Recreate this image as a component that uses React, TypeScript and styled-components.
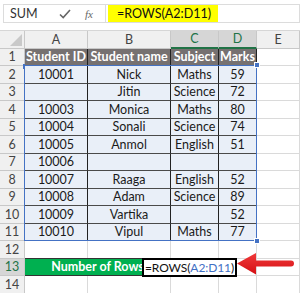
import React from 'react';
import styled, { createGlobalStyle, css } from 'styled-components';

const Global = createGlobalStyle`
  html, body { margin: 0; padding: 0; background: #fff; }
  body { font-family: Lato, "Liberation Sans", sans-serif; }
`;

const Page = styled.div`
  width: 300px;
  height: 293px;
  overflow: hidden;
  position: relative;
  background: #fff;
`;

const FormulaBar = styled.div`
  height: 31px;
  box-sizing: border-box;
  display: flex;
  align-items: flex-start;
  padding: 4px 0 0 3px;
  background: #fff;
  border-bottom: 1px solid #d6d6d6;
`;

const NameBox = styled.div`
  width: 48px;
  height: 19px;
  box-sizing: border-box;
  border: 1px solid #dcdcdc;
  border-right: none;
  font-size: 12.5px;
  color: #333;
  display: flex;
  align-items: center;
  padding-left: 6px;
`;

const IconZone = styled.div`
  width: 54px;
  height: 19px;
  box-sizing: border-box;
  border-top: 1px solid #dcdcdc;
  border-bottom: 1px solid #dcdcdc;
  display: flex;
  align-items: center;
  gap: 14px;
  padding-left: 8px;
`;

const Fx = styled.span`
  font-family: "Liberation Serif", serif;
  font-style: italic;
  font-size: 11px;
  color: #666;
`;

const FormulaInput = styled.div`
  flex: 1;
  height: 19px;
  box-sizing: border-box;
  border: 1px solid #dcdcdc;
  display: flex;
  align-items: stretch;
  padding-left: 2px;
`;

const Highlight = styled.span`
  background: #ffff00;
  width: 110px;
  display: flex;
  align-items: center;
  padding-left: 9px;
  box-sizing: border-box;
  font-size: 12.5px;
  color: #111;
`;

const Sheet = styled.div`
  display: grid;
  grid-template-columns: 25px 63px 83px 48px 38px 1fr;
  grid-template-rows: repeat(15, 17.5px);
  position: relative;
`;

const Corner = styled.div`
  background: #f0f0f0;
  border-right: 1px solid #c8c8c8;
  border-bottom: 1px solid #c8c8c8;
  box-sizing: border-box;
  position: relative;
  &::after {
    content: '';
    position: absolute;
    right: 2px;
    bottom: 2px;
    width: 0;
    height: 0;
    border-left: 12px solid transparent;
    border-bottom: 12px solid #c9c9c9;
  }
`;

const HeaderCell = styled.div<{ $sel?: boolean }>`
  box-sizing: border-box;
  background: #f0f0f0;
  border-right: 1px solid #c8c8c8;
  border-bottom: 1px solid #c8c8c8;
  display: flex;
  align-items: center;
  justify-content: center;
  font-size: 12.5px;
  color: #444;
  ${(p) =>
    p.$sel &&
    css`
      background: #d6d6d6;
      color: #217346;
    `}
`;

const ColHeader = styled(HeaderCell)<{ $sel?: boolean }>`
  ${(p) =>
    p.$sel &&
    css`
      border-bottom: 2px solid #217346;
    `}
`;

type Kind = 'plain' | 'head' | 'data' | 'total';

const Cell = styled.div<{ $kind: Kind }>`
  box-sizing: border-box;
  display: flex;
  align-items: center;
  justify-content: center;
  font-size: 12.5px;
  white-space: nowrap;
  position: relative;
  border-right: 1px solid #dadada;
  border-bottom: 1px solid #dadada;
  color: #1a1a1a;
  background: #fff;
  ${(p) =>
    p.$kind === 'head' &&
    css`
      background: #767171;
      color: #fff;
      font-weight: 700;
      border-right: 1px solid #222;
      border-bottom: 1px solid #444;
    `}
  ${(p) =>
    p.$kind === 'data' &&
    css`
      background: #e9eff8;
      border-right: 1px solid #222;
      border-bottom: 1px solid #4a4a4a;
    `}
  ${(p) =>
    p.$kind === 'total' &&
    css`
      grid-column: span 2;
      background: #00b050;
      color: #fff;
      font-weight: 700;
      border-top: 1px solid #333;
      border-bottom: 1px solid #333;
      margin-top: -1px;
    `}
`;

const Selection = styled.div`
  position: absolute;
  grid-column: 2 / 6;
  grid-row: 3 / 13;
  top: -1px;
  left: -1px;
  right: 0;
  bottom: 0;
  border: 1px solid #4472c4;
  pointer-events: none;
  &::before,
  &::after {
    content: '';
    position: absolute;
    width: 4px;
    height: 4px;
    background: #4472c4;
    border: 1px solid #fff;
    right: -4px;
  }
  &::before { top: -4px; }
  &::after { bottom: -4px; }
`;

const SelMark = styled.div`
  position: absolute;
  grid-column: 2;
  grid-row: 3;
  top: -2px;
  left: -2px;
  width: 2px;
  height: 5px;
  background: #4472c4;
  pointer-events: none;
`;

const EditBox = styled.div`
  position: absolute;
  left: -29px;
  top: -1px;
  width: 95px;
  height: 19px;
  box-sizing: border-box;
  border: 2px solid #000;
  background: #fff;
  display: flex;
  align-items: center;
  padding-left: 1px;
  font-size: 12px;
  letter-spacing: -0.1px;
  color: #111;
  z-index: 2;
`;

const Ref = styled.span`
  color: #3f6fc4;
`;

const Arrow = styled.svg`
  position: absolute;
  left: 236px;
  top: 251px;
  z-index: 3;
`;

const cols = ['A', 'B', 'C', 'D', 'E'];
const selCols = ['C', 'D'];

const rows: [string, string, string, string][] = [
  ['10001', 'Nick', 'Maths', '59'],
  ['', 'Jitin', 'Science', '72'],
  ['10003', 'Monica', 'Maths', '80'],
  ['10004', 'Sonali', 'Science', '74'],
  ['10005', 'Anmol', 'English', '51'],
  ['10006', '', '', ''],
  ['10007', 'Raaga', 'English', '52'],
  ['10008', 'Adam', 'Science', '89'],
  ['10009', 'Vartika', '', '52'],
  ['10010', 'Vipul', 'Maths', '77'],
];

const heads = ['Student ID', 'Student name', 'Subject', 'Marks'];

export default function App() {
  return (
    <Page>
      <Global />
      <FormulaBar>
        <NameBox>SUM</NameBox>
        <IconZone>
          <svg width="12" height="10" viewBox="0 0 12 10">
            <path d="M1 5.5 L4.2 8.5 L11 1" fill="none" stroke="#666" strokeWidth="1.6" />
          </svg>
          <Fx>fx</Fx>
        </IconZone>
        <FormulaInput>
          <Highlight>=ROWS(A2:D11)</Highlight>
        </FormulaInput>
      </FormulaBar>
      <Sheet>
        <Corner />
        {cols.map((c) => (
          <ColHeader key={c} $sel={selCols.includes(c)}>
            {c}
          </ColHeader>
        ))}

        <HeaderCell>1</HeaderCell>
        {heads.map((h) => (
          <Cell key={h} $kind="head">
            {h}
          </Cell>
        ))}
        <Cell $kind="plain" />

        {rows.map((r, i) => (
          <React.Fragment key={i}>
            <HeaderCell>{i + 2}</HeaderCell>
            {r.map((v, j) => (
              <Cell key={j} $kind="data">
                {v}
              </Cell>
            ))}
            <Cell $kind="plain" />
          </React.Fragment>
        ))}

        <HeaderCell>12</HeaderCell>
        {cols.map((c) => (
          <Cell key={c} $kind="plain" />
        ))}

        <HeaderCell $sel>13</HeaderCell>
        <Cell $kind="total">Number of Rows</Cell>
        <Cell $kind="plain">
          <EditBox>
            =ROWS(<Ref>A2:D11</Ref>)
          </EditBox>
        </Cell>
        <Cell $kind="plain" />
        <Cell $kind="plain" />

        <HeaderCell>14</HeaderCell>
        {cols.map((c) => (
          <Cell key={c} $kind="plain" />
        ))}

        <Selection />
        <SelMark />
      </Sheet>
      <Arrow width="60" height="28" viewBox="0 0 60 28">
        <defs>
          <linearGradient id="ag" x1="0" y1="0" x2="0" y2="1">
            <stop offset="0" stopColor="#f03a3a" />
            <stop offset="1" stopColor="#d40f14" />
          </linearGradient>
        </defs>
        <path
          d="M1 12.5 L20 2 L20 9.5 L55 9.5 Q58 9.5 58 12.5 Q58 15.5 55 15.5 L20 15.5 L20 23.5 Z"
          fill="url(#ag)"
        />
      </Arrow>
    </Page>
  );
}
